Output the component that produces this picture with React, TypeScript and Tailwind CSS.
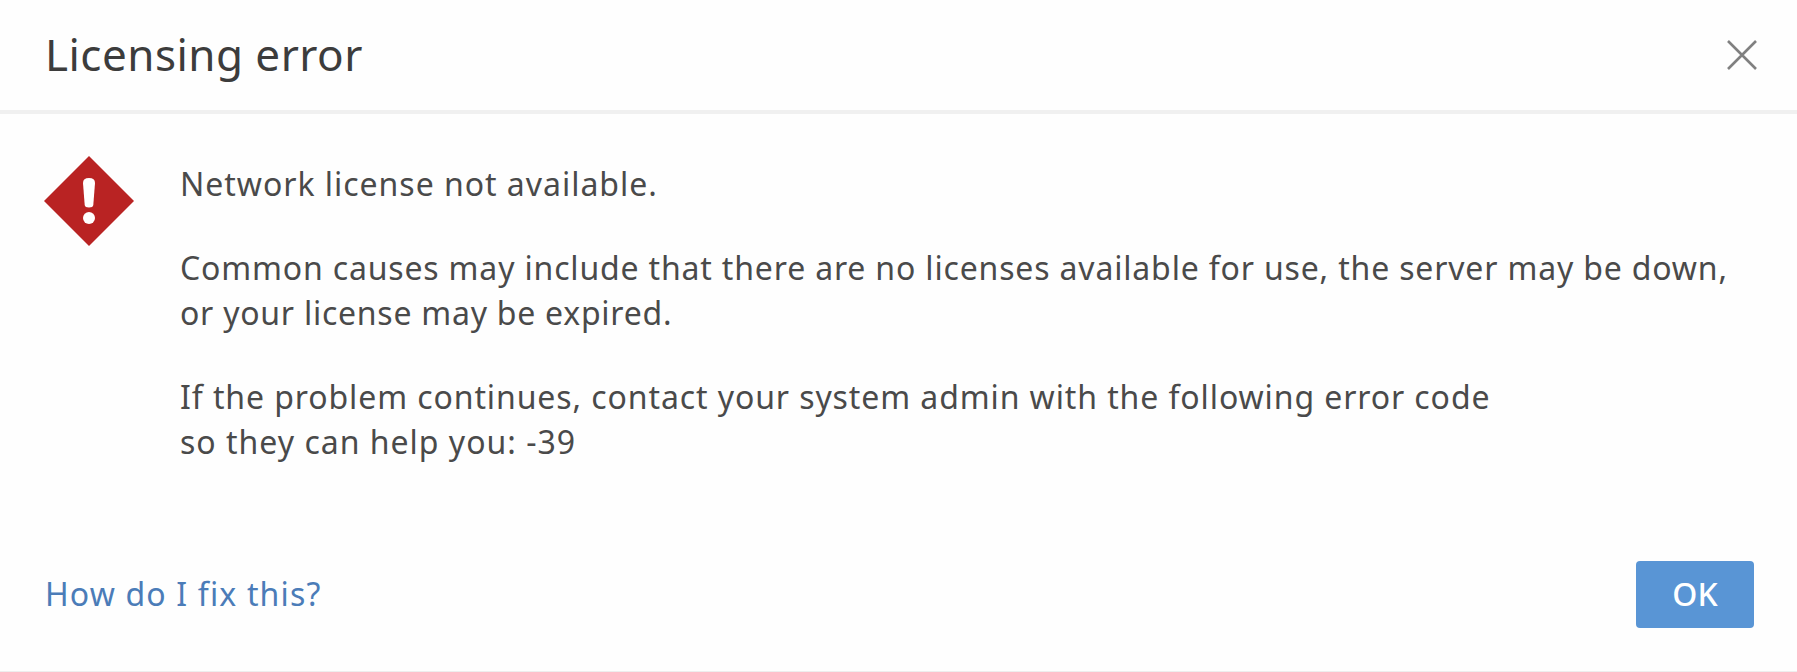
export default function App() {
  return (
    <div className="flex h-[672px] w-full flex-col border-b border-[#eeeeee] bg-[#fefefe] font-['Noto_Sans',sans-serif] text-[#4a4a4a]">
      <header className="flex h-[114px] shrink-0 items-center justify-between border-b-4 border-[#f0f0f0] pr-[39px] pl-[45px]">
        <h1 className="pb-0.5 text-[44px] leading-none tracking-[0.47px] whitespace-nowrap text-[#3c3c3c]">Licensing error</h1>
        <button type="button" aria-label="Close">
          <svg width="32" height="32" viewBox="0 0 32 32" fill="none" stroke="#808080" strokeWidth="2.6">
            <path d="M2 2 30 30M30 2 2 30" />
          </svg>
        </button>
      </header>
      <main className="flex flex-1 pt-[42px] pl-[44px]">
        <svg className="shrink-0" width="90" height="90" viewBox="0 0 90 90">
          <path d="M45 0 90 45 45 90 0 45Z" fill="#b92323" />
          <path d="M39 27q0-5 6-5t6 5l-1.700 22q-.3 2.500-4.300 2.500t-4.300-2.500Z" fill="#fff" />
          <circle cx="45" cy="62" r="6" fill="#fff" />
        </svg>
        <div className="mt-[5px] ml-[46px] text-[32px] leading-[45px] whitespace-nowrap">
          <p className="tracking-[0.97px]">Network license not available.</p>
          <p className="mt-[39px] tracking-[0.83px]">
            Common causes may include that there are no licenses available for use, the server may be down,
            <br />
            <span className="tracking-[0.75px]">or your license may be expired.</span>
          </p>
          <p className="mt-[39px] tracking-[0.9px]">
            If the problem continues, contact your system admin with the following error code
            <br />
            <span className="tracking-[1px]">so they can help you: -39</span>
          </p>
        </div>
      </main>
      <footer className="flex h-[110px] items-start justify-between pr-[43px] pl-[45px]">
        <a href="#" className="pt-[9px] text-[32px] leading-[48px] tracking-[1.15px] text-[#4b7cb8]">
          How do I fix this?
        </a>
        <button type="button" className="h-[67px] w-[118px] rounded bg-[#5995d5] pb-0.5 text-[32px] font-medium text-white">
          OK
        </button>
      </footer>
    </div>
  );
}
